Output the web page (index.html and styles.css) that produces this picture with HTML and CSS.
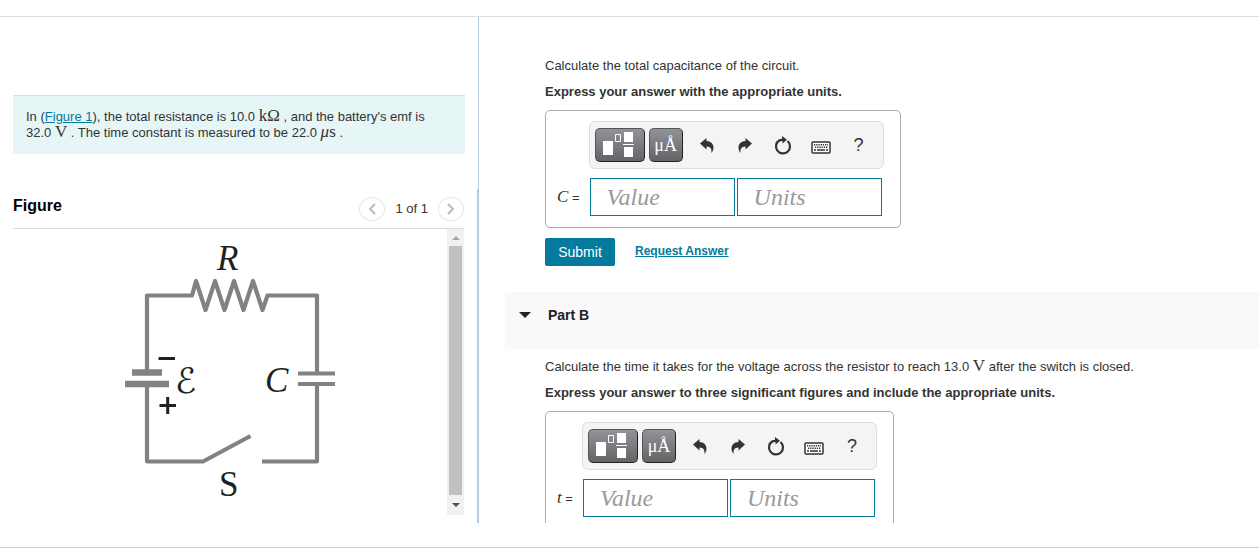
FILE: index.html
```html
<!DOCTYPE html>
<html lang="en">
<head>
<meta charset="utf-8">
<title>RC Circuit</title>
<link rel="stylesheet" href="styles.css">
</head>
<body>
<svg class="defs" aria-hidden="true">
  <symbol id="template" viewBox="0 0 48 32">
    <path fill="#fff" d="M7 12h10v14H7zM28 3h9v10h-9zM28 18h9v10h-9zM27 15h11v1H27z"/>
    <path fill="none" stroke="#fff" d="M19.500 5.500h5v7h-5z"/>
  </symbol>
  <symbol id="undo" viewBox="0 0 14 15">
    <path fill="#333" d="M0 5.500 6.500 0v3C11 3.200 13.500 6 13.500 9.500c0 2.500-1 4.200-2.200 5.500.7-3.500-.3-6.300-4.800-6.500v3z"/>
  </symbol>
  <symbol id="reset" viewBox="0 0 18 19">
    <path fill="none" stroke="#333" stroke-width="2.200" d="M5.500 4.300A7 7 0 1 0 13.500 5"/>
    <path fill="#333" d="M8 0l5 3.800L8.500 7.500V5L4.500 5.500 5 3.300 8 2.800z"/>
  </symbol>
  <symbol id="keyboard" viewBox="0 0 20 13">
    <rect x="1" y="1" width="18" height="11" rx="1" fill="#fff" stroke="#333" stroke-width="1.500"/>
    <path stroke="#333" stroke-width="1.500" stroke-dasharray="1.300 .9" d="M3 3.700h14M4 6.200h13"/>
    <path stroke="#333" stroke-width="1.500" d="M3 9h2M6 9h8M15 9h2"/>
  </symbol>
</svg>
<div class="panes">
  <section class="left">
    <p class="intro">In (<a href="#figure">Figure 1</a>), the total resistance is 10.0 <span class="math">kΩ</span> , and the battery's emf is 32.0 <span class="math">V</span> . The time constant is measured to be 22.0 <span class="math"><i>μ</i>s</span> .</p>
    <div class="figure-panel">
      <header class="figure-head">
        <h2>Figure</h2>
        <nav class="pager">
          <button aria-label="Previous figure"><svg width="8" height="12" viewBox="0 0 8 12"><path d="M7 1 2 6l5 5"/></svg></button>
          <span>1 of 1</span>
          <button aria-label="Next figure"><svg width="8" height="12" viewBox="0 0 8 12"><path d="m1 1 5 5-5 5"/></svg></button>
        </nav>
      </header>
      <div class="figure-view" id="figure">
        <svg class="circuit" width="240" height="280" viewBox="0 0 240 280" role="img" aria-label="RC circuit with a battery, a resistor, a capacitor and a switch">
          <g fill="none" stroke="#808285" stroke-width="4.200" stroke-linejoin="round">
            <path d="M37 142V65.500H82L86 51 95.500 80 105 51 114.500 80 124 51 133.500 80 143 51 152.500 80 157.500 65.500H207V142"/>
            <path d="M37 156V231.500H93L140.500 206"/>
            <path d="M207 156V231.500H152"/>
            <path d="M188 143.500h37M188 154h37"/>
            <path stroke-width="6.500" d="M22 142.500h30M15 154h44"/>
          </g>
          <path fill="none" stroke="#231f20" stroke-width="3" d="M48.500 128.500H65M49.500 175.500H66M57.700 167v17"/>
          <g class="labels">
            <text x="107" y="40" class="var">R</text>
            <text x="155" y="162" class="var">C</text>
            <text x="109" y="266">S</text>
            <text x="65" y="163" class="script">ℰ</text>
          </g>
        </svg>
        <div class="scrollbar"><span class="up"></span><span class="thumb"></span><span class="down"></span></div>
      </div>
    </div>
  </section>
  <main class="right">
    <section class="part first">
      <p>Calculate the total capacitance of the circuit.</p>
      <p class="hint">Express your answer with the appropriate units.</p>
      <div class="answer">
        <div class="toolbar">
          <button class="dark wide" aria-label="Templates"><svg width="48" height="32"><use href="#template"/></svg></button>
          <button class="dark">μÅ</button>
          <button class="tool" aria-label="Undo"><svg width="14" height="15"><use href="#undo"/></svg></button>
          <button class="tool" aria-label="Redo"><svg class="flip" width="14" height="15"><use href="#undo"/></svg></button>
          <button class="tool" aria-label="Reset"><svg width="18" height="19"><use href="#reset"/></svg></button>
          <button class="tool low" aria-label="Keyboard"><svg width="20" height="13"><use href="#keyboard"/></svg></button>
          <button class="tool">?</button>
        </div>
        <label for="c-value"><i>C</i> =</label>
        <div class="fields"><input id="c-value" placeholder="Value"><input aria-label="C units" placeholder="Units"></div>
      </div>
      <div class="actions"><button class="submit">Submit</button><a href="#answer">Request Answer</a></div>
    </section>
    <h3 class="part-head"><span class="caret"></span>Part B</h3>
    <section class="part">
      <p>Calculate the time it takes for the voltage across the resistor to reach 13.0 <span class="math">V</span> after the switch is closed.</p>
      <p class="hint">Express your answer to three significant figures and include the appropriate units.</p>
      <div class="answer">
        <div class="toolbar">
          <button class="dark wide" aria-label="Templates"><svg width="48" height="32"><use href="#template"/></svg></button>
          <button class="dark">μÅ</button>
          <button class="tool" aria-label="Undo"><svg width="14" height="15"><use href="#undo"/></svg></button>
          <button class="tool" aria-label="Redo"><svg class="flip" width="14" height="15"><use href="#undo"/></svg></button>
          <button class="tool" aria-label="Reset"><svg width="18" height="19"><use href="#reset"/></svg></button>
          <button class="tool low" aria-label="Keyboard"><svg width="20" height="13"><use href="#keyboard"/></svg></button>
          <button class="tool">?</button>
        </div>
        <label for="t-value"><i>t</i> =</label>
        <div class="fields"><input id="t-value" placeholder="Value"><input aria-label="t units" placeholder="Units"></div>
      </div>
    </section>
  </main>
</div>
<footer class="foot"></footer>
</body>
</html>
```
FILE: styles.css
```css
* { box-sizing: border-box; }
body {
  margin: 0;
  padding-top: 16px;
  height: 100vh;
  display: flex;
  flex-direction: column;
  overflow: hidden;
  font: 13px/16px "Liberation Sans", Arial, sans-serif;
  color: #333;
  background: #fff;
}
button { font: inherit; color: inherit; border: 0; padding: 0; background: none; cursor: pointer; }
a { color: #047a9c; }
p, h2, h3 { margin: 0; }
.defs { display: none; }
.panes {
  flex: 1;
  min-height: 0;
  display: grid;
  grid-template-columns: minmax(0, 479fr) minmax(0, 780fr);
  border-top: 1px solid #ddd;
}
.foot { height: 30px; flex: none; background: linear-gradient(#ccc, #ccc) 0 24px / 100% 1px no-repeat; }

/* problem statement and figure */
.left { display: flex; flex-direction: column; min-height: 0; border-right: 1px solid #b8cce0; }
.intro {
  margin: 78px 13px 35px;
  padding: 13px;
  border-top: 1px solid #ddd;
  background: #e6f6f7;
}
.math { font-family: "Liberation Serif", "Times New Roman", serif; font-size: 17px; line-height: 13px; }
.figure-panel {
  flex: 1;
  min-height: 0;
  display: flex;
  flex-direction: column;
  padding: 0 13px 8px;
  border-right: 1px solid #b8cce0;
}
.figure-head { display: flex; justify-content: space-between; height: 40px; border-bottom: 1px solid #ddd; }
.figure-head h2 { font-size: 16px; line-height: 34px; color: #000; }
.pager { display: flex; align-items: center; gap: 10px; }
.pager button {
  display: grid;
  place-items: center;
  width: 26px;
  height: 24px;
  border: 1px solid #e6e6e6;
  border-radius: 50%;
}
.pager path { fill: none; stroke: #bbb; stroke-width: 2; }
.figure-view { flex: 1; min-height: 0; display: flex; overflow: hidden; }
.circuit { margin: 1px auto 0; flex: none; }
.labels { font: 35px "Liberation Serif", serif; fill: #231f20; }
.labels .var { font-style: italic; }
.labels .script { font: 35px "DejaVu Sans", serif; }
.scrollbar { display: flex; flex-direction: column; align-items: center; width: 17px; background: #f1f1f1; }
.thumb { flex: 1; width: 13px; background: #c1c1c1; }
.up, .down { height: 17px; display: grid; place-items: center; }
.down { height: 20px; }
.up::before, .down::before { content: ""; border: 4px solid transparent; border-top-width: 0; border-bottom: 4px solid #a3a3a3; }
.down::before { border-width: 4px 4px 0; border-top-color: #505050; }

/* question parts */
.right { min-width: 0; overflow: hidden; padding-left: 26px; }
.part { padding: 10px 0 0 40px; }
.part.first { padding-top: 41px; }
.hint { margin: 10px 0; font-weight: bold; }
.answer {
  display: grid;
  grid-template-columns: auto auto;
  gap: 9px;
  align-items: center;
  width: fit-content;
  padding: 10px 16px 11px 11px;
  border: 1px solid #aaa;
  border-radius: 5px;
}
.answer label { font-size: 13px; }
.answer label i { font-family: "Liberation Serif", serif; font-size: 17px; }
.toolbar {
  grid-column: 2;
  display: flex;
  align-items: center;
  height: 48px;
  padding: 0 5px;
  border: 1px solid #ddd;
  border-radius: 6px;
  background: #f4f4f4;
}
.dark {
  display: grid;
  place-items: center;
  width: 34px;
  height: 34px;
  margin-right: 5px;
  border: 1px solid #555;
  border-right-color: #222;
  border-bottom-color: #222;
  border-radius: 5px;
  background: linear-gradient(#93929a, #646467);
  color: #fff;
  font: 18px/32px "Liberation Serif", serif;
}
.dark.wide { width: 50px; margin-right: 4px; }
.tool { display: grid; place-items: center; width: 38px; height: 34px; font-size: 18px; }
.tool.low { padding-top: 4px; }
.flip { transform: scaleX(-1); }
.fields { display: flex; gap: 2px; padding: 0 1px; }
.fields input {
  width: 145px;
  height: 38px;
  padding: 0 16px;
  border: 1px solid #047a9c;
  border-radius: 0;
  background: #fff;
  font: italic 24px "Liberation Serif", "Times New Roman", serif;
}
.fields input::placeholder { color: #999; }
.actions { display: flex; align-items: flex-start; gap: 20px; margin: 10px 0 26px; }
.actions a { font-size: 12px; line-height: 26px; font-weight: bold; }
.submit { width: 70px; height: 28px; border-radius: 2px; background: #047a9c; color: #fff; font-size: 14px; }
.part-head {
  display: flex;
  align-items: center;
  gap: 17px;
  height: 57px;
  padding: 0 14px 11px;
  background: #f9f9f9;
  color: #222;
  font-size: 14px;
}
.caret { border: 6px solid transparent; border-top-color: #222; border-bottom: 0; }
```
